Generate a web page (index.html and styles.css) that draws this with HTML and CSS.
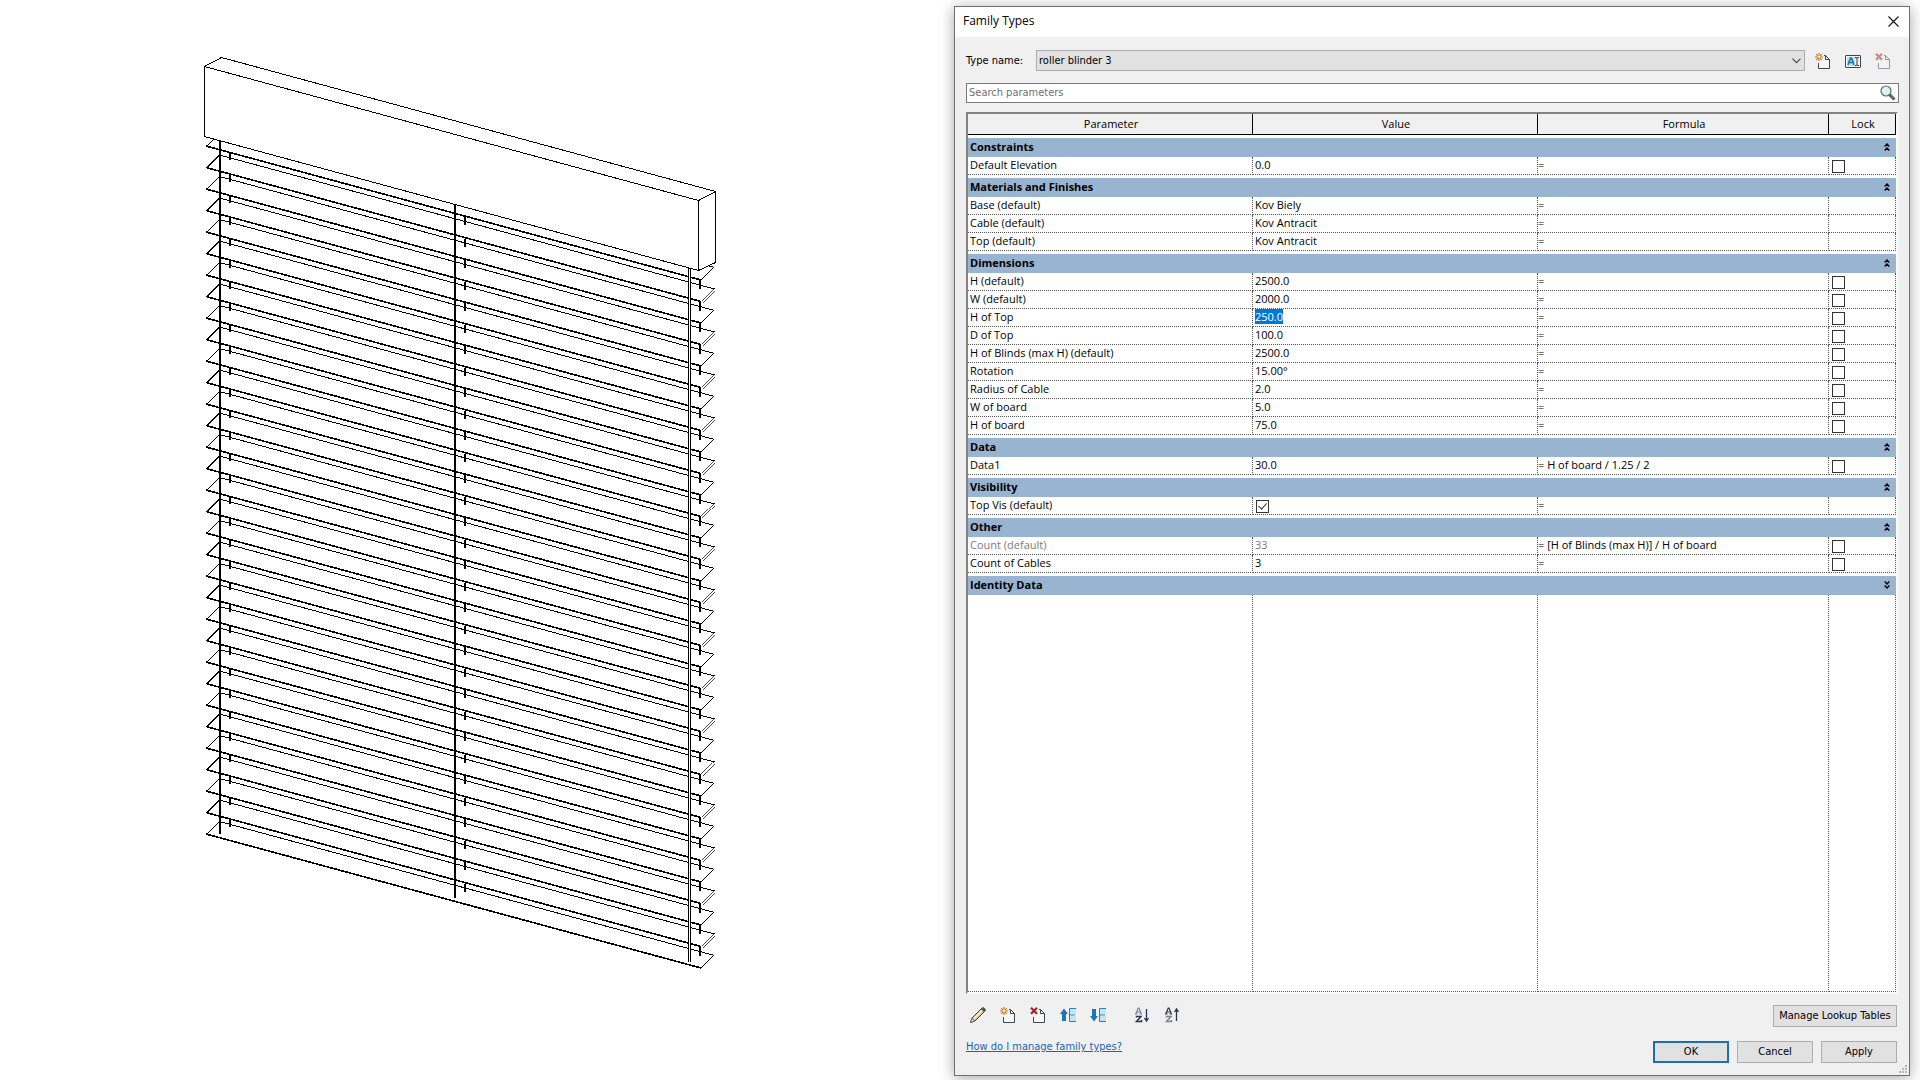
FILE: index.html
```html
<!DOCTYPE html>
<html lang="en">
<head>
<meta charset="utf-8">
<title>Family Types</title>
<link rel="stylesheet" href="styles.css">
</head>
<body>
<main class="workspace">
  <section class="viewport" aria-label="3D view">
    <svg class="model" viewBox="0 0 954 1080" preserveAspectRatio="xMinYMin meet" role="img" aria-label="Roller blind">
      <defs>
        <g id="slat">
          <path class="thin" d="M219.500 133.500 206.500 146.500M219.500 133.500 714.500 267.500"/>
          <path class="board" d="M206 146 701 280"/>
        </g>
        <path id="ticks" class="thick" d="M230 153v7M465 217v8M700 280v9"/>
        <g id="pair">
          <use href="#slat"/><use href="#ticks"/>
          <path class="edge" d="M701 280 713.500 267.500"/>
          <g transform="translate(0 21.500)">
            <use href="#slat"/><use href="#ticks"/>
            <path class="fine" d="M700.500 279.500 713 267M702 281 714 269"/>
          </g>
        </g>
        <g id="pairs2"><use href="#pair"/><use href="#pair" y="43"/></g>
        <g id="pairs4"><use href="#pairs2"/><use href="#pairs2" y="86"/></g>
        <g id="pairs8"><use href="#pairs4"/><use href="#pairs4" y="172"/></g>
      </defs>
      <use href="#pairs8"/>
      <use href="#pairs8" y="344"/>
      <use href="#slat" y="688"/>
      <path class="edge" d="M701 968 713.500 955.500"/>
      <path class="thick" d="M220 138V834M455 200V898"/>
      <path class="gap" d="M689.500 262V962"/>
      <path class="thin" d="M688.500 262V962M690.500 262V962"/>
      <path class="box" d="M204.500 66.500 221.500 57.500 715.500 191.500V262.500L698.500 270.500 204.500 136.500Z"/>
      <path class="thin" d="M204.500 66.500 698.500 200.500V270.500M698.500 200.500 715.500 191.500"/>
    </svg>
  </section>

  <section class="dialog" role="dialog" aria-labelledby="dialog-title">
    <header class="titlebar">
      <h1 id="dialog-title">Family Types</h1>
      <button class="icon-btn close" aria-label="Close"><svg width="11" height="11" viewBox="0 0 11 11"><path d="M.5.5l10 10M10.500.5l-10 10" fill="none" stroke="#111" stroke-width="1.100"/></svg></button>
    </header>

    <div class="content">
      <div class="type-row">
        <label for="type-name">Type name:</label>
        <div class="combo">
          <select id="type-name"><option>roller blinder 3</option></select>
          <svg class="combo-arrow" width="9" height="6" viewBox="0 0 9 6"><path d="M.5.7l4 4 4-4" fill="none" stroke="#444" stroke-width="1.100"/></svg>
        </div>
        <div class="type-tools">
          <button class="icon-btn" aria-label="New type"><svg width="16" height="16" viewBox="0 0 16 16"><use href="#page-icon"/><use href="#spark-icon"/></svg></button>
          <button class="icon-btn" aria-label="Rename type"><svg width="16" height="16" viewBox="0 0 16 16"><rect x=".5" y="2.500" width="15" height="12" rx=".5" fill="#f4f9fc" stroke="#3c4650"/><rect x="2" y="4" width="8" height="9" fill="#bfe0f4"/><path d="M3 12 5.500 5h1L9 12M4 9.500h4" fill="none" stroke="#1c70b4" stroke-width="1.600"/><path d="M10 4.500h1.200l.8.500.8-.5H14M12 5v7M10 12.500h1.200l.8-.5.8.5H14" fill="none" stroke="#333"/></svg></button>
          <button class="icon-btn faded" aria-label="Delete type" disabled><svg width="16" height="16" viewBox="0 0 16 16"><use href="#page-icon"/><use href="#cross-icon"/></svg></button>
        </div>
      </div>

      <div class="search">
        <input type="text" placeholder="Search parameters" aria-label="Search parameters">
        <button class="icon-btn" aria-label="Search"><svg width="16" height="16" viewBox="0 0 16 16"><path d="M9.500 9.500 14.500 14.500" stroke="#3f4d4d" stroke-width="3" fill="none"/><path d="M10 9.500 14.500 14" stroke="#8ba0a0" fill="none"/><circle cx="6" cy="6" r="5" fill="#dcf1f1" stroke="#567070" stroke-width="1.200"/><path d="M3.500 6A3 3 0 0 1 6 3.200" stroke="#fff" fill="none"/></svg></button>
      </div>

      <div class="grid-frame">
        <table class="params">
          <colgroup><col class="c-name"><col class="c-value"><col><col class="c-lock"></colgroup>
          <thead><tr><th>Parameter</th><th>Value</th><th>Formula</th><th>Lock</th></tr></thead>
          <tbody>
            <tr class="band"><th colspan="4"><div>Constraints<svg width="6" height="8"><use href="#fold"/></svg></div></th></tr>
            <tr><td>Default Elevation</td><td>0.0</td><td>=</td><td><input type="checkbox" aria-label="Lock Default Elevation"></td></tr>
            <tr class="band"><th colspan="4"><div>Materials and Finishes<svg width="6" height="8"><use href="#fold"/></svg></div></th></tr>
            <tr><td>Base (default)</td><td>Kov Biely</td><td>=</td><td></td></tr>
            <tr><td>Cable (default)</td><td>Kov Antracit</td><td>=</td><td></td></tr>
            <tr><td>Top (default)</td><td>Kov Antracit</td><td>=</td><td></td></tr>
            <tr class="band"><th colspan="4"><div>Dimensions<svg width="6" height="8"><use href="#fold"/></svg></div></th></tr>
            <tr><td>H (default)</td><td>2500.0</td><td>=</td><td><input type="checkbox" aria-label="Lock H"></td></tr>
            <tr><td>W (default)</td><td>2000.0</td><td>=</td><td><input type="checkbox" aria-label="Lock W"></td></tr>
            <tr><td>H of Top</td><td><span class="selected">250.0</span></td><td>=</td><td><input type="checkbox" aria-label="Lock H of Top"></td></tr>
            <tr><td>D of Top</td><td>100.0</td><td>=</td><td><input type="checkbox" aria-label="Lock D of Top"></td></tr>
            <tr><td>H of Blinds (max H) (default)</td><td>2500.0</td><td>=</td><td><input type="checkbox" aria-label="Lock H of Blinds"></td></tr>
            <tr><td>Rotation</td><td>15.00°</td><td>=</td><td><input type="checkbox" aria-label="Lock Rotation"></td></tr>
            <tr><td>Radius of Cable</td><td>2.0</td><td>=</td><td><input type="checkbox" aria-label="Lock Radius of Cable"></td></tr>
            <tr><td>W of board</td><td>5.0</td><td>=</td><td><input type="checkbox" aria-label="Lock W of board"></td></tr>
            <tr><td>H of board</td><td>75.0</td><td>=</td><td><input type="checkbox" aria-label="Lock H of board"></td></tr>
            <tr class="band"><th colspan="4"><div>Data<svg width="6" height="8"><use href="#fold"/></svg></div></th></tr>
            <tr><td>Data1</td><td>30.0</td><td>= H of board / 1.25 / 2</td><td><input type="checkbox" aria-label="Lock Data1"></td></tr>
            <tr class="band"><th colspan="4"><div>Visibility<svg width="6" height="8"><use href="#fold"/></svg></div></th></tr>
            <tr><td>Top Vis (default)</td><td><input type="checkbox" aria-label="Top Vis" checked></td><td>=</td><td></td></tr>
            <tr class="band"><th colspan="4"><div>Other<svg width="6" height="8"><use href="#fold"/></svg></div></th></tr>
            <tr><td class="dim">Count (default)</td><td class="dim">33</td><td>= [H of Blinds (max H)] / H of board</td><td><input type="checkbox" aria-label="Lock Count"></td></tr>
            <tr><td>Count of Cables</td><td>3</td><td>=</td><td><input type="checkbox" aria-label="Lock Count of Cables"></td></tr>
            <tr class="band"><th colspan="4"><div>Identity Data<svg width="6" height="8"><use href="#unfold"/></svg></div></th></tr>
            <tr class="filler"><td></td><td></td><td></td><td></td></tr>
          </tbody>
        </table>
      </div>

      <div class="toolbar">
        <div class="tools">
          <button class="icon-btn" aria-label="Edit parameter"><svg width="16" height="16" viewBox="0 0 16 16"><path d="M.5 15.500 2 11 12 1q1-.8 2.200.2l.6.6q1 1 .2 2.200L5 14Z" fill="#d8c39a" stroke="#4a4540"/><path d="M4 11.500 12 3.500" stroke="#fff3d4" stroke-width="1.500"/><path d="M11 2l3 3 1.200-1.200q.6-1-.2-1.800l-1-1q-1-.7-1.800 0Z" fill="#555"/><path d="M.5 15.500 2 11.500l2.500 2.500Z" fill="#e8e4dc" stroke="#555" stroke-width=".7"/></svg></button>
          <button class="icon-btn" aria-label="New parameter"><svg width="16" height="16" viewBox="0 0 16 16"><use href="#page-icon"/><use href="#spark-icon"/></svg></button>
          <button class="icon-btn" aria-label="Delete parameter"><svg width="16" height="16" viewBox="0 0 16 16"><use href="#page-icon"/><use href="#cross-icon"/></svg></button>
          <button class="icon-btn" aria-label="Move up"><svg width="16" height="16" viewBox="0 0 16 16"><path d="M4 1.500 8 7H6v7H2V7H0Z" fill="#1b78b0"/><use href="#rows-icon"/></svg></button>
          <button class="icon-btn" aria-label="Move down"><svg width="16" height="16" viewBox="0 0 16 16"><path d="M4 14.500 8 9H6V2H2v7H0Z" fill="#1b78b0"/><use href="#rows-icon"/></svg></button>
          <button class="icon-btn sort" aria-label="Sort ascending"><svg width="16" height="16" viewBox="0 0 16 16"><use href="#a-icon" stroke="#7b8494"/><use href="#z-icon" stroke="#2b3350"/><path d="M11.500 2v12M9.500 11l2 3 2-3" fill="none" stroke="#2b3350" stroke-width="1.300"/></svg></button>
          <button class="icon-btn" aria-label="Sort descending"><svg width="16" height="16" viewBox="0 0 16 16"><use href="#a-icon" stroke="#2b3350"/><use href="#z-icon" stroke="#7b8494"/><path d="M11.500 14V2M9.500 5l2-3 2 3" fill="none" stroke="#2b3350" stroke-width="1.300"/></svg></button>
        </div>
        <button class="btn lookup">Manage Lookup Tables</button>
      </div>

      <footer class="footer">
        <a href="#help">How do I manage family types?</a>
        <div class="actions">
          <button class="btn primary">OK</button>
          <button class="btn">Cancel</button>
          <button class="btn">Apply</button>
        </div>
      </footer>
    </div>
    <svg class="grip" width="8" height="8" viewBox="0 0 8 8"><path d="M6 0h2v2H6zM3 3h2v2H3zM6 3h2v2H6zM0 6h2v2H0zM3 6h2v2H3zM6 6h2v2H6z" fill="#b4b4b4"/></svg>
  </section>
</main>

<svg class="sprites" width="0" height="0" aria-hidden="true">
  <defs>
    <g id="page-icon"><path d="M4 8h4V5h1v2h5v8H4Z" fill="#f6f6f6"/><path d="M3.500 10v5.500h11V6.500L10.500 2.500H9M10.500 2.500V6.500H14.500" fill="none" stroke="#3f474f"/></g>
    <g id="spark-icon"><path d="M4 0v8M0 4h8M1.200 1.200l5.600 5.600M6.800 1.200l-5.600 5.600" stroke="#c9701a" stroke-width="1.100" fill="none"/><circle cx="4" cy="4" r="1.400" fill="#fff3b0"/></g>
    <path id="cross-icon" d="M1 .8l6 6M7 .8l-6 6" stroke="#a8202a" stroke-width="2.200" fill="none"/>
    <g id="rows-icon"><path d="M10 2h6v5h-6zM10 9h6v5h-6z" fill="#c4e3f3"/><path d="M16 1.500H9.500v13H16M9.500 8H15" fill="none" stroke="#2583b6"/></g>
    <path id="a-icon" d="M.8 7 3.200 1h.8L6.500 7M2 5h3.500M0 7h2.500M4.500 7H7" fill="none" stroke-width="1.200"/>
    <path id="z-icon" d="M1.500 10.500V9.500H6L1.500 14.500H6.500V13" fill="none" stroke-width="1.500"/>
    <path id="fold" d="M.7 3.500 3 1l2.300 2.500M.7 7.500 3 5l2.300 2.500" fill="none" stroke="#000" stroke-width="1.400"/>
    <path id="unfold" d="M.7.5 3 3 5.300.5M.7 4.500 3 7l2.300-2.500" fill="none" stroke="#000" stroke-width="1.400"/>
  </defs>
</svg>
</body>
</html>
```
FILE: styles.css
```css
* { box-sizing: border-box; }

body {
  margin: 0;
  background: #fff;
  color: #000;
  font: 11px/14px "DejaVu Sans Condensed", "DejaVu Sans", sans-serif;
}

button, input, select { font: inherit; color: inherit; }

.workspace {
  display: grid;
  grid-template-columns: 954fr 966fr;
  height: 100vh;
  min-height: 760px;
  overflow: hidden;
}

.viewport { min-width: 0; min-height: 0; }

.model {
  display: block;
  width: 100%;
  height: 100%;
  shape-rendering: crispEdges;
  fill: none;
  stroke: #000;
}
.thin { stroke-width: 1px; }
.fine { stroke-width: 0.7px; }
.edge { stroke-width: 1.4px; }
.board { stroke-width: 1.6px; }
.thick { stroke-width: 2px; }
.gap { stroke: #fff; stroke-width: 1px; }
.box { fill: #fff; stroke-width: 1px; }

.dialog {
  position: relative;
  display: flex;
  flex-direction: column;
  min-width: 0;
  margin: 6px 10px 4px 0;
  border: 1px solid #6e6e6e;
  background: #f0f0f0;
  box-shadow: 0 2px 14px rgba(0, 0, 0, 0.35);
}

.titlebar {
  display: flex;
  align-items: center;
  justify-content: space-between;
  height: 30px;
  padding: 0 10px 2px 8px;
  background: #fff;
}
.titlebar h1 {
  margin: 0;
  font: 400 12px/16px "Open Sans", "Noto Sans", sans-serif;
}

.icon-btn {
  display: block;
  flex: none;
  padding: 0;
  border: 0;
  background: none;
}
.icon-btn svg { display: block; }
.faded { opacity: 0.5; }

.content {
  flex: 1;
  display: flex;
  flex-direction: column;
  min-height: 0;
  padding: 13px 10px 12px 11px;
}

.type-row {
  display: flex;
  align-items: center;
  gap: 10px;
}
.type-row label { width: 60px; white-space: nowrap; }
.combo { position: relative; flex: 1; display: flex; }
.combo select {
  appearance: none;
  width: 100%;
  height: 21px;
  padding: 0 2px;
  border: 1px solid #adadad;
  border-radius: 0;
  background: #e1e1e1;
}
.combo-arrow { position: absolute; right: 4px; top: 8px; pointer-events: none; }
.type-tools { display: flex; gap: 14px; margin-right: 8px; }

.search {
  display: flex;
  align-items: center;
  height: 20px;
  margin-top: 12px;
  padding-right: 2px;
  border: 1px solid #7a7a7a;
  background: #fff;
}
.search input {
  flex: 1;
  min-width: 0;
  padding: 0 2px;
  border: 0;
  outline: 0;
  background: none;
}
.search input::placeholder { color: #707070; opacity: 1; }

.grid-frame {
  flex: 1;
  min-height: 0;
  margin: 9px 1px 0 0;
  border: 2px solid;
  border-color: #828282 #fafafa #fafafa #828282;
  background: #fff;
}

.params {
  width: 100%;
  height: 100%;
  table-layout: fixed;
  border-collapse: separate;
  border-spacing: 0;
  font: 11px/15px "Open Sans", "Noto Sans", sans-serif;
}
.c-name, .c-value { width: 285px; }
.c-lock { width: 67px; }

.params th, .params td { padding: 0 2px; overflow: hidden; white-space: nowrap; }
.params thead th {
  height: 21px;
  padding: 0 0 2px 2px;
  border-right: 1px solid #000;
  border-bottom: 1px solid #000;
  background: #f0f0f0;
  font-weight: 400;
  text-align: center;
}
.params td {
  height: 18px;
  border-right: 1px dotted #555;
  border-bottom: 1px dotted #555;
  vertical-align: top;
}
.params td:nth-child(3) { padding-left: 0; }
.params .band th {
  height: 22px;
  padding: 0 0 2px;
  border-top: 3px solid #fff;
  background: #99b4d1;
  font-weight: 700;
}
.band div {
  display: flex;
  align-items: center;
  justify-content: space-between;
  padding: 0 6px 0 2px;
}
.params .filler td { height: auto; }
.filler { height: 100%; }
.dim { color: #7c7c7c; }
.selected { background: #0078d7; color: #fff; }

.params input {
  appearance: none;
  position: relative;
  display: block;
  width: 13px;
  height: 13px;
  margin: 3px 0 0 1px;
  border: 1px solid #333;
  background: #fff;
}
.params input:checked::after {
  content: "";
  position: absolute;
  left: 3px;
  top: 0;
  width: 4px;
  height: 7px;
  border: solid #333;
  border-width: 0 1px 1px 0;
  transform: rotate(42deg);
}

.toolbar {
  display: flex;
  align-items: flex-start;
  justify-content: space-between;
  margin-top: 11px;
}
.tools { display: flex; gap: 14px; padding: 2px 0 0 4px; }
.sort { margin-left: 15px; }

.btn {
  width: 76px;
  height: 22px;
  padding: 0;
  border: 1px solid #adadad;
  background: #e1e1e1;
  text-align: center;
  white-space: nowrap;
}
.lookup { width: 124px; margin-right: 2px; }
.primary { border: 2px solid #1b6fb5; }

.footer {
  display: flex;
  justify-content: space-between;
  align-items: flex-start;
  margin-top: 14px;
}
.footer a { color: #1b66ab; line-height: 12px; }
.actions { display: flex; gap: 8px; margin-right: 2px; }

.grip { position: absolute; right: 2px; bottom: 2px; }
.sprites { position: absolute; }
```
